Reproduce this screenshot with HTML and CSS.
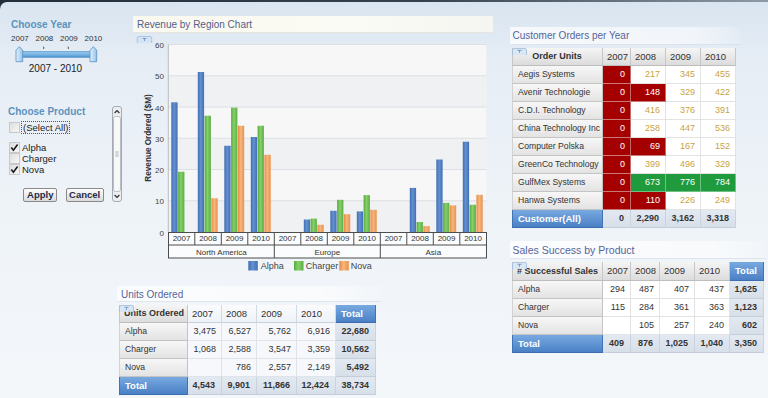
FILE: index.html
```html
<!DOCTYPE html>
<html>
<head>
<meta charset="utf-8">
<title>Dashboard</title>
<link rel="stylesheet" href="styles.css">
</head>
<body>
<div class="page">
  <div class="main">
    <div class="upper">
      <aside class="controls">
        <div class="ctl-title year-title">Choose Year</div>
        <div class="year-labels"><span>2007</span><span>2008</span><span>2009</span><span>2010</span></div>
        <svg class="slider" width="85" height="18" viewBox="0 0 85 18">
          <defs>
            <linearGradient id="trk" x1="0" y1="0" x2="0" y2="1"><stop offset="0" stop-color="#9fd0f2"/><stop offset="1" stop-color="#4f98d4"/></linearGradient>
            <linearGradient id="hdl" x1="0" y1="0" x2="1" y2="0"><stop offset="0" stop-color="#e3f1fb"/><stop offset="1" stop-color="#92c3e9"/></linearGradient>
          </defs>
          <path d="M29.7 1.7V4M54.3 1.7V4" stroke="#555" stroke-width="1"/>
          <rect x="6" y="6.7" width="73" height="5.6" rx="1.5" fill="url(#trk)" stroke="#4d8cc4" stroke-width="0.8"/>
          <path d="M2 5.2L5.35 1.7L8.7 5.2V16.7H2Z" fill="url(#hdl)" stroke="#5b8fc0" stroke-width="0.8"/>
          <path d="M76 5.2L79.35 1.7L82.7 5.2V16.7H76Z" fill="url(#hdl)" stroke="#5b8fc0" stroke-width="0.8"/>
        </svg>
        <div class="range">2007 - 2010</div>
        <div class="product">
          <div class="plist">
            <div class="ctl-title">Choose Product</div>
            <div class="cb all"><span class="box"></span><span class="focus">(Select All)</span></div>
            <div class="cb"><span class="box"><svg width="11" height="11" viewBox="0 0 11 11"><path d="M2.3 5.6L4.4 8.2L8.6 2.6" fill="none" stroke="#1a1a1a" stroke-width="1.6"/></svg></span>Alpha</div>
            <div class="cb"><span class="box"></span>Charger</div>
            <div class="cb"><span class="box"><svg width="11" height="11" viewBox="0 0 11 11"><path d="M2.3 5.6L4.4 8.2L8.6 2.6" fill="none" stroke="#1a1a1a" stroke-width="1.6"/></svg></span>Nova</div>
            <div class="buttons"><button class="btn apply">Apply</button><button class="btn cancel">Cancel</button></div>
          </div>
          <svg class="scroll" width="10" height="96" viewBox="0 0 10 96">
            <rect x="0.5" y="0.5" width="9" height="95" rx="2.5" fill="#eceef1" stroke="#a3abb4"/>
            <path d="M2.6 7L5 4.6L7.4 7" fill="none" stroke="#333" stroke-width="1.3"/>
            <rect x="1.5" y="10.5" width="7" height="75" rx="2" fill="#f8f8f8" stroke="#b7bec6"/>
            <path d="M3.3 46H6.7M3.3 48H6.7M3.3 50H6.7" stroke="#9aa2ab" stroke-width="0.8"/>
            <path d="M2.6 89L5 91.4L7.4 89" fill="none" stroke="#333" stroke-width="1.3"/>
          </svg>
        </div>
      </aside>
      <section class="chart-panel">
        <div class="titlebar">Revenue by Region Chart</div>
        <svg class="chart" width="362" height="239" viewBox="0 0 362 239">
          <defs>
            <linearGradient id="gA" x1="0" y1="0" x2="1" y2="0"><stop offset="0" stop-color="#3e6db2"/><stop offset="0.45" stop-color="#6391d0"/><stop offset="1" stop-color="#416fb4"/></linearGradient>
            <linearGradient id="gC" x1="0" y1="0" x2="1" y2="0"><stop offset="0" stop-color="#55ac3f"/><stop offset="0.45" stop-color="#86cf69"/><stop offset="1" stop-color="#5aae43"/></linearGradient>
            <linearGradient id="gN" x1="0" y1="0" x2="1" y2="0"><stop offset="0" stop-color="#e58c45"/><stop offset="0.45" stop-color="#f7b67e"/><stop offset="1" stop-color="#e8914b"/></linearGradient>
          </defs>
          <g class="tabicon">
            <path d="M4.2 10V5Q4.2 3.5 5.7 3.5H17.2Q18.7 3.5 18.7 5V10" fill="#d5e4f4" stroke="#a0bbdb" stroke-width="0.8"/>
            <path d="M9.5 5.5H13.5M11.5 5.5V8" stroke="#7195c2" stroke-width="0.9"/>
          </g>
          <rect x="35.3" y="11.5" width="318" height="187.5" fill="#f7f7f8"/>
          <rect x="35.3" y="42.75" width="318" height="31.25" fill="#f0f1f3"/>
          <rect x="35.3" y="105.25" width="318" height="31.25" fill="#f0f1f3"/>
          <rect x="35.3" y="167.75" width="318" height="31.25" fill="#f0f1f3"/>
          <g stroke="#dcdfe4" stroke-width="1">
            <path d="M35.3 11.5H353.3M35.3 42.75H353.3M35.3 74H353.3M35.3 105.25H353.3M35.3 136.5H353.3M35.3 167.75H353.3"/>
          </g>
          <path d="M35.3 11.5V199" stroke="#b9bdc4" stroke-width="1"/>
          <g class="ylab" font-size="8" fill="#444" text-anchor="end">
            <text x="31" y="15">60</text>
            <text x="31" y="46.25">50</text>
            <text x="31" y="77.5">40</text>
            <text x="31" y="108.75">30</text>
            <text x="31" y="140">20</text>
            <text x="31" y="171.25">10</text>
            <text x="31" y="202.5">0</text>
          </g>
          <text transform="translate(17.5 105) rotate(-90)" text-anchor="middle" font-size="8.2" font-weight="bold" fill="#333">Revenue Ordered ($M)</text>
          <g fill="url(#gA)">
            <rect x="38.3" y="69.3" width="6.3" height="129.7"/>
            <rect x="64.8" y="39" width="6.3" height="160"/>
            <rect x="91.3" y="112.75" width="6.3" height="86.25"/>
            <rect x="117.8" y="104" width="6.3" height="95"/>
            <rect x="170.8" y="186.5" width="6.3" height="12.5"/>
            <rect x="197.3" y="177.75" width="6.3" height="21.25"/>
            <rect x="223.8" y="178.4" width="6.3" height="20.6"/>
            <rect x="276.8" y="154.9" width="6.3" height="44.1"/>
            <rect x="303.3" y="126.5" width="6.3" height="72.5"/>
            <rect x="329.8" y="108.7" width="6.3" height="90.3"/>
          </g>
          <g fill="url(#gC)">
            <rect x="45.1" y="138.7" width="6.3" height="60.3"/>
            <rect x="71.6" y="82.7" width="6.3" height="116.3"/>
            <rect x="98.1" y="74.6" width="6.3" height="124.4"/>
            <rect x="124.6" y="92.75" width="6.3" height="106.25"/>
            <rect x="177.6" y="185.6" width="6.3" height="13.4"/>
            <rect x="204.1" y="166.8" width="6.3" height="32.2"/>
            <rect x="230.6" y="162.1" width="6.3" height="36.9"/>
            <rect x="283.6" y="189" width="6.3" height="10"/>
            <rect x="310.1" y="169.9" width="6.3" height="29.1"/>
            <rect x="336.6" y="171.8" width="6.3" height="27.2"/>
          </g>
          <g fill="url(#gN)">
            <rect x="78.4" y="165.25" width="6.3" height="33.75"/>
            <rect x="104.9" y="92.75" width="6.3" height="106.25"/>
            <rect x="131.4" y="121.8" width="6.3" height="77.2"/>
            <rect x="184.4" y="191.8" width="6.3" height="7.2"/>
            <rect x="210.9" y="181.2" width="6.3" height="17.8"/>
            <rect x="237.4" y="176.8" width="6.3" height="22.2"/>
            <rect x="290.4" y="193.1" width="6.3" height="5.9"/>
            <rect x="316.9" y="172.4" width="6.3" height="26.6"/>
            <rect x="343.4" y="161.8" width="6.3" height="37.2"/>
          </g>
          <rect x="35.5" y="199.5" width="318" height="25.5" fill="#fbfcfd" stroke="#4d4d4d" stroke-width="1"/>
          <path d="M35.5 212H353.5M61.8 199.5V212M88.3 199.5V212M114.8 199.5V212M141.3 199.5V225M167.8 199.5V212M194.3 199.5V212M220.8 199.5V212M247.3 199.5V225M273.8 199.5V212M300.3 199.5V212M326.8 199.5V212" stroke="#4d4d4d" stroke-width="1" fill="none"/>
          <g font-size="8" fill="#333" text-anchor="middle">
            <text x="48.55" y="208.3">2007</text>
            <text x="75.05" y="208.3">2008</text>
            <text x="101.55" y="208.3">2009</text>
            <text x="128.05" y="208.3">2010</text>
            <text x="154.55" y="208.3">2007</text>
            <text x="181.05" y="208.3">2008</text>
            <text x="207.55" y="208.3">2009</text>
            <text x="234.05" y="208.3">2010</text>
            <text x="260.55" y="208.3">2007</text>
            <text x="287.05" y="208.3">2008</text>
            <text x="313.55" y="208.3">2009</text>
            <text x="340.05" y="208.3">2010</text>
            <text x="88.3" y="221.5">North America</text>
            <text x="194.3" y="221.5">Europe</text>
            <text x="300.3" y="221.5">Asia</text>
          </g>
          <rect x="115.3" y="228" width="9.5" height="9.5" fill="url(#gA)"/>
          <rect x="161" y="228" width="9.5" height="9.5" fill="url(#gC)"/>
          <rect x="206.3" y="228" width="9.5" height="9.5" fill="url(#gN)"/>
          <g font-size="9" fill="#444">
            <text x="127.7" y="236.3">Alpha</text>
            <text x="172.7" y="236.3">Charger</text>
            <text x="217.7" y="236.3">Nova</text>
          </g>
        </svg>
      </section>
    </div>
    <section class="units-panel">
      <div class="ptitle units-title">Units Ordered</div>
      <div class="tablewrap units-wrap">
        <table class="grid units">
          <colgroup><col class="w69"><col class="w34"><col class="w35"><col class="w40"><col class="w39"><col class="w40"></colgroup>
          <tr><th class="corner left">Units Ordered</th><th class="hd light">2007</th><th class="hd light">2008</th><th class="hd light">2009</th><th class="hd light">2010</th><th class="bluehd">Total</th></tr>
          <tr><th class="rh">Alpha</th><td class="pale">3,475</td><td class="pale">6,527</td><td class="pale">5,762</td><td class="pale">6,916</td><td class="tot">22,680</td></tr>
          <tr><th class="rh">Charger</th><td class="pale">1,068</td><td class="pale">2,588</td><td class="pale">3,547</td><td class="pale">3,359</td><td class="tot">10,562</td></tr>
          <tr><th class="rh">Nova</th><td class="pale"></td><td class="pale">786</td><td class="pale">2,557</td><td class="pale">2,149</td><td class="tot">5,492</td></tr>
          <tr><th class="bluelbl">Total</th><td class="tot">4,543</td><td class="tot">9,901</td><td class="tot">11,866</td><td class="tot">12,424</td><td class="tot">38,734</td></tr>
        </table>
        <svg class="tab" width="15" height="7" viewBox="0 0 15 7"><path d="M0.5 7V2Q0.5 0.5 2 0.5H13Q14.5 0.5 14.5 2V7" fill="#d5e4f4" fill-opacity="0.85" stroke="#a0bbdb" stroke-width="0.8"/><path d="M5.5 2.3H9.5M7.5 2.3V4.8" stroke="#7195c2" stroke-width="0.9"/></svg>
      </div>
    </section>
  </div>
  <div class="side">
    <section class="orders-panel">
      <div class="ptitle orders-title">Customer Orders per Year</div>
      <div class="tablewrap">
        <table class="grid orders">
          <colgroup><col class="w91"><col class="w28"><col class="w35"><col class="w35"><col class="w35"></colgroup>
          <tr><th class="corner">Order Units</th><th class="hd">2007</th><th class="hd">2008</th><th class="hd">2009</th><th class="hd">2010</th></tr>
          <tr><th class="rh">Aegis Systems</th><td class="red">0</td><td class="gold">217</td><td class="gold">345</td><td class="gold">455</td></tr>
          <tr><th class="rh">Avenir Technologie</th><td class="red">0</td><td class="red">148</td><td class="gold">329</td><td class="gold">422</td></tr>
          <tr><th class="rh">C.D.I. Technology</th><td class="red">0</td><td class="gold">416</td><td class="gold">376</td><td class="gold">391</td></tr>
          <tr><th class="rh">China Technology Inc</th><td class="red">0</td><td class="gold">258</td><td class="gold">447</td><td class="gold">536</td></tr>
          <tr><th class="rh">Computer Polska</th><td class="red">0</td><td class="red">69</td><td class="gold">167</td><td class="gold">152</td></tr>
          <tr><th class="rh">GreenCo Technology</th><td class="red">0</td><td class="gold">399</td><td class="gold">496</td><td class="gold">329</td></tr>
          <tr><th class="rh">GulfMex Systems</th><td class="red">0</td><td class="green">673</td><td class="green">776</td><td class="green">784</td></tr>
          <tr><th class="rh">Hanwa Systems</th><td class="red">0</td><td class="red">110</td><td class="gold">226</td><td class="gold">249</td></tr>
          <tr><th class="bluelbl">Customer(All)</th><td class="tot">0</td><td class="tot">2,290</td><td class="tot">3,162</td><td class="tot">3,318</td></tr>
        </table>
        <svg class="tab" width="15" height="7" viewBox="0 0 15 7"><path d="M0.5 7V2Q0.5 0.5 2 0.5H13Q14.5 0.5 14.5 2V7" fill="#d5e4f4" fill-opacity="0.85" stroke="#a0bbdb" stroke-width="0.8"/><path d="M5.5 2.3H9.5M7.5 2.3V4.8" stroke="#7195c2" stroke-width="0.9"/></svg>
      </div>
    </section>
    <section class="sales-panel">
      <div class="ptitle sales-title">Sales Success by Product</div>
      <div class="tablewrap">
        <table class="grid sales">
          <colgroup><col class="w91"><col class="w28"><col class="w29"><col class="w35"><col class="w35"><col class="w34"></colgroup>
          <tr class="hdrow"><th class="corner left">&#35; Successful Sales</th><th class="hd">2007</th><th class="hd">2008</th><th class="hd">2009</th><th class="hd">2010</th><th class="bluehd">Total</th></tr>
          <tr><th class="rh">Alpha</th><td>294</td><td>487</td><td>407</td><td>437</td><td class="tot">1,625</td></tr>
          <tr><th class="rh">Charger</th><td>115</td><td>284</td><td>361</td><td>363</td><td class="tot">1,123</td></tr>
          <tr><th class="rh">Nova</th><td></td><td>105</td><td>257</td><td>240</td><td class="tot">602</td></tr>
          <tr><th class="bluelbl">Total</th><td class="tot">409</td><td class="tot">876</td><td class="tot">1,025</td><td class="tot">1,040</td><td class="tot">3,350</td></tr>
        </table>
        <svg class="tab" width="15" height="7" viewBox="0 0 15 7"><path d="M0.5 7V2Q0.5 0.5 2 0.5H13Q14.5 0.5 14.5 2V7" fill="#d5e4f4" fill-opacity="0.85" stroke="#a0bbdb" stroke-width="0.8"/><path d="M5.5 2.3H9.5M7.5 2.3V4.8" stroke="#7195c2" stroke-width="0.9"/></svg>
      </div>
    </section>
  </div>
</div>
</body>
</html>
```

FILE: styles.css
```css
* { box-sizing: border-box; }
html, body { margin: 0; padding: 0; }
body {
  width: 768px;
  height: 398px;
  overflow: hidden;
  background: linear-gradient(90deg, #222e3a, #34424f 55%, #8e9aa6);
  font-family: "Liberation Sans", Arial, sans-serif;
}
.page {
  margin-top: 2px;
  height: 396px;
  border-top-left-radius: 7px;
  background: linear-gradient(180deg, #d9e5f1 0, #e6edf5 60px, #eef3f8 200px, #f4f7fa 100%);
  display: flex;
}
.main { width: 505px; display: flex; flex-direction: column; }
.upper { display: flex; height: 270px; }

/* controls */
.controls { width: 133px; padding-top: 17px; }
.ctl-title { font-weight: bold; font-size: 10px; line-height: 12px; color: #5b93be; }
.year-title { padding-left: 11px; }
.year-labels { display: flex; margin-top: 2.5px; padding-left: 11px; font-size: 8px; line-height: 10px; color: #333; }
.year-labels span { width: 24.5px; }
.slider { display: block; margin: 1.5px 0 0 14px; }
.range { width: 83px; margin-left: 14px; text-align: center; font-size: 10px; line-height: 12px; color: #222; }
.product { display: flex; margin-top: 31.3px; padding-left: 8px; align-items: flex-start; }
.plist { width: 103px; }
.cb { display: flex; align-items: center; height: 11px; font-size: 9.5px; color: #222; padding-left: 1px; }
.cb.all { height: 12px; margin-top: 3.7px; margin-bottom: 7.7px; }
.cb .box {
  width: 11px; height: 11px; margin-right: 2px; flex: none;
  border: 1px solid #c9c9c9;
  background: linear-gradient(135deg, #dedede, #f7f7f7);
}
.cb .box svg { display: block; margin: -1px 0 0 -1px; }
.cb .focus { outline: 1px dotted #555; line-height: 11px; padding: 0 1px; }
.buttons { display: flex; gap: 8.4px; margin-top: 13px; padding-left: 15.3px; }
.btn {
  height: 14px; padding: 0;
  font-family: "Liberation Sans", Arial, sans-serif;
  font-weight: bold; font-size: 9.5px; line-height: 12px; color: #1e2b45;
  background: linear-gradient(#fdfdfd, #dadada);
  border: 1px solid #8a8a8a; border-radius: 2px;
}
.apply { width: 34px; }
.cancel { width: 38px; }
.scroll { display: block; margin-left: 1px; }

/* chart */
.chart-panel { width: 362px; margin-top: 14px; }
.titlebar {
  width: 360px;
  height: 17px; line-height: 18px; padding-left: 4px;
  font-size: 10px; color: #525e8c;
  background: linear-gradient(90deg, #f9f9ef, #fbfbf5 60%, #f5f6f1);
  border-bottom: 1px solid #e4e6de;
}
.chart { display: block; }

/* panels */
.ptitle {
  font-size: 10px; color: #54659a;
  background: linear-gradient(90deg, rgba(255,255,255,0.75), rgba(255,255,255,0.55) 80%, rgba(255,255,255,0.1));
  border-bottom: 1px solid rgba(205,215,228,0.6);
}
.units-panel { margin: 14px 0 0 117px; width: 263px; }
.units-title { height: 16px; line-height: 17px; padding-left: 4px; }
.units-wrap { margin: 1.3px 0 0 4.7px; }
.side { flex: 1; padding-left: 5px; }
.orders-panel { margin-top: 25px; }
.orders-title { width: 230px; height: 18px; line-height: 18px; padding-left: 2.5px; }
.sales-panel { margin-top: 13px; }
.sales-title { width: 256px; height: 18px; line-height: 18px; padding-left: 2.5px; font-size: 10.5px; }
.tablewrap { position: relative; margin: 3px 0 0 2px; width: max-content; }
.tab { position: absolute; left: 0; top: 0; }

/* tables */
.grid { border-collapse: separate; border-spacing: 0; table-layout: fixed; font-size: 9px; color: #333; }
.orders { width: 224px; }
.sales { width: 252px; }
.units { width: 257px; }
col.w91 { width: 91px; }
col.w28 { width: 28px; }
col.w29 { width: 29px; }
col.w34 { width: 34px; }
col.w35 { width: 35px; }
col.w39 { width: 39px; }
col.w40 { width: 40px; }
col.w69 { width: 69px; }
.grid td, .grid th {
  padding: 0 5px 0 4px;
  line-height: 17px;
  border-right: 1px solid #e3e3e3;
  border-bottom: 1px solid #e3e3e3;
  white-space: nowrap;
  overflow: hidden;
  font-weight: normal;
  text-align: right;
  background: #fff;
}
.grid .hd {
  text-align: left; font-size: 9.5px; color: #333;
  background: linear-gradient(#f5f5f5, #dcdcdc);
  border-right: 1px solid #c6c6c6; border-bottom: 1px solid #bdbdbd;
}
.grid .hd.light { background: linear-gradient(#fafbfd, #eef2f7); border-right: 1px solid #d3d9e1; border-bottom: 1px solid #c9d0d9; }
.grid .corner {
  text-align: center; font-weight: bold; color: #333;
  background: linear-gradient(#f5f5f5, #dcdcdc);
  border-left: 1px solid #c6c6c6;
  border-right: 1px solid #c6c6c6; border-bottom: 1px solid #bdbdbd;
}
.grid .corner.left { text-align: left; padding-left: 4px; }
.sales .hdrow th { line-height: 18px; }
.grid .rh {
  text-align: left; padding: 0 2px 0 5px; color: #333; font-size: 8.6px;
  background: linear-gradient(#f7f7f7, #e3e3e3);
  border-left: 1px solid #d2d2d2;
  border-right: 1px solid #c4c4c4; border-bottom: 1px solid #c4c4c4;
}
.grid .red { background: #a50000; color: #fff; border-right-color: #c56a6a; border-bottom-color: #c97777; }
.grid .green { background: #1f9b3d; color: #fff; border-right-color: #6cc283; border-bottom-color: #6cc283; }
.grid .gold { color: #c9a33f; }
.grid .pale { background: #f6f8fb; border-right-color: #dfe4ea; border-bottom-color: #dfe4ea; }
.grid .tot {
  font-weight: bold; padding-right: 6px;
  background: linear-gradient(#e3e9f1, #d7dfe9);
  border-right-color: #c9d2dd; border-bottom-color: #c4cdd9;
}
.grid .bluehd, .grid .bluelbl {
  font-weight: bold; font-size: 9.5px; color: #fff;
  background: linear-gradient(#78a9e0, #4a80c5);
  border-right: 1px solid #3f72b6; border-bottom: 1px solid #3b6db0;
}
.grid .bluehd { text-align: left; padding-left: 5px; }
.grid .bluelbl { text-align: left; padding-left: 5px; border-left: 1px solid #3f72b6; }
```
